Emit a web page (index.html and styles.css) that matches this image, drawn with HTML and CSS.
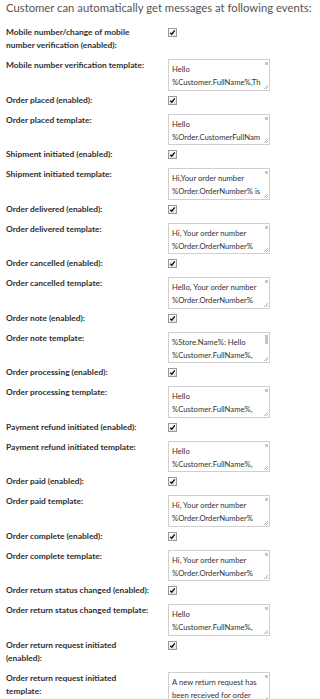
FILE: index.html
```html
<!DOCTYPE html>
<html lang="en">
<head>
<meta charset="utf-8">
<title>SMS events</title>
<link rel="stylesheet" href="styles.css">
</head>
<body>
<div class="page">
  <div class="title">Customer can automatically get messages at following events:</div>

  <div class="row check"><div class="label">Mobile number/change of mobile number verification (enabled):</div><span class="cb"><svg viewBox="0 0 8 8" width="8" height="8"><path d="M1.5 4.2 L3.2 6 L6.6 1.6" fill="none" stroke="#111" stroke-width="1.6"/></svg></span></div>
  <div class="row tpl"><div class="label">Mobile number verification template:</div><div class="field"><textarea>Hello
%Customer.FullName%,Thanks</textarea><span class="sb"></span><span class="grip"></span></div></div>

  <div class="row check"><div class="label">Order placed (enabled):</div><span class="cb"><svg viewBox="0 0 8 8" width="8" height="8"><path d="M1.5 4.2 L3.2 6 L6.6 1.6" fill="none" stroke="#111" stroke-width="1.6"/></svg></span></div>
  <div class="row tpl"><div class="label">Order placed template:</div><div class="field"><textarea>Hello
%Order.CustomerFullName%,</textarea><span class="sb"></span><span class="grip"></span></div></div>

  <div class="row check"><div class="label">Shipment initiated (enabled):</div><span class="cb"><svg viewBox="0 0 8 8" width="8" height="8"><path d="M1.5 4.2 L3.2 6 L6.6 1.6" fill="none" stroke="#111" stroke-width="1.6"/></svg></span></div>
  <div class="row tpl"><div class="label">Shipment initiated template:</div><div class="field"><textarea>Hi,Your order number
%Order.OrderNumber% is
shipped.</textarea><span class="sb"></span><span class="grip"></span></div></div>

  <div class="row check"><div class="label">Order delivered (enabled):</div><span class="cb"><svg viewBox="0 0 8 8" width="8" height="8"><path d="M1.5 4.2 L3.2 6 L6.6 1.6" fill="none" stroke="#111" stroke-width="1.6"/></svg></span></div>
  <div class="row tpl"><div class="label">Order delivered template:</div><div class="field"><textarea>Hi, Your order number
%Order.OrderNumber%
has been delivered.</textarea><span class="sb"></span><span class="grip"></span></div></div>

  <div class="row check"><div class="label">Order cancelled (enabled):</div><span class="cb"><svg viewBox="0 0 8 8" width="8" height="8"><path d="M1.5 4.2 L3.2 6 L6.6 1.6" fill="none" stroke="#111" stroke-width="1.6"/></svg></span></div>
  <div class="row tpl"><div class="label">Order cancelled template:</div><div class="field"><textarea>Hello, Your order number
%Order.OrderNumber%
has been cancelled.</textarea><span class="sb"></span><span class="grip"></span></div></div>

  <div class="row check"><div class="label">Order note (enabled):</div><span class="cb"><svg viewBox="0 0 8 8" width="8" height="8"><path d="M1.5 4.2 L3.2 6 L6.6 1.6" fill="none" stroke="#111" stroke-width="1.6"/></svg></span></div>
  <div class="row tpl"><div class="label">Order note template:</div><div class="field"><textarea>%Store.Name%: Hello
%Customer.FullName%,
a new order note has been added to your account.</textarea><span class="thumb"></span><span class="grip"></span></div></div>

  <div class="row check"><div class="label">Order processing (enabled):</div><span class="cb"><svg viewBox="0 0 8 8" width="8" height="8"><path d="M1.5 4.2 L3.2 6 L6.6 1.6" fill="none" stroke="#111" stroke-width="1.6"/></svg></span></div>
  <div class="row tpl"><div class="label">Order processing template:</div><div class="field"><textarea>Hello
%Customer.FullName%,
your order is being processed.</textarea><span class="sb"></span><span class="grip"></span></div></div>

  <div class="row check"><div class="label">Payment refund initiated (enabled):</div><span class="cb"><svg viewBox="0 0 8 8" width="8" height="8"><path d="M1.5 4.2 L3.2 6 L6.6 1.6" fill="none" stroke="#111" stroke-width="1.6"/></svg></span></div>
  <div class="row tpl"><div class="label">Payment refund initiated template:</div><div class="field"><textarea>Hello
%Customer.FullName%,
your refund has been initiated.</textarea><span class="sb"></span><span class="grip"></span></div></div>

  <div class="row check"><div class="label">Order paid (enabled):</div><span class="cb"><svg viewBox="0 0 8 8" width="8" height="8"><path d="M1.5 4.2 L3.2 6 L6.6 1.6" fill="none" stroke="#111" stroke-width="1.6"/></svg></span></div>
  <div class="row tpl"><div class="label">Order paid template:</div><div class="field"><textarea>Hi, Your order number
%Order.OrderNumber%
has been paid.</textarea><span class="sb"></span><span class="grip"></span></div></div>

  <div class="row check"><div class="label">Order complete (enabled):</div><span class="cb"><svg viewBox="0 0 8 8" width="8" height="8"><path d="M1.5 4.2 L3.2 6 L6.6 1.6" fill="none" stroke="#111" stroke-width="1.6"/></svg></span></div>
  <div class="row tpl"><div class="label">Order complete template:</div><div class="field"><textarea>Hi, Your order number
%Order.OrderNumber%
has been completed.</textarea><span class="sb"></span><span class="grip"></span></div></div>

  <div class="row check"><div class="label">Order return status changed (enabled):</div><span class="cb"><svg viewBox="0 0 8 8" width="8" height="8"><path d="M1.5 4.2 L3.2 6 L6.6 1.6" fill="none" stroke="#111" stroke-width="1.6"/></svg></span></div>
  <div class="row tpl"><div class="label">Order return status changed template:</div><div class="field"><textarea>Hello
%Customer.FullName%,
your return request status has changed.</textarea><span class="sb"></span><span class="grip"></span></div></div>

  <div class="row check"><div class="label">Order return request initiated (enabled):</div><span class="cb"><svg viewBox="0 0 8 8" width="8" height="8"><path d="M1.5 4.2 L3.2 6 L6.6 1.6" fill="none" stroke="#111" stroke-width="1.6"/></svg></span></div>
  <div class="row tpl"><div class="label">Order return request initiated template:</div><div class="field"><textarea>A new return request has
been received for order
%Order.OrderNumber%.</textarea><span class="sb"></span><span class="grip"></span></div></div>
</div>
</body>
</html>
```

FILE: styles.css
```css
html, body {
  margin: 0;
  padding: 0;
  background: #fff;
}
body {
  font-family: Lato, "Open Sans", sans-serif;
  color: #333;
}
.page {
  padding: 1px 0 0 6px;
}
.title {
  font-size: 11.3px;
  line-height: 14px;
  color: #555;
  margin: 0 0 11px;
  white-space: nowrap;
}
.row {
  display: flex;
  align-items: flex-start;
}
.row.check {
  margin-bottom: 7px;
}
.row.tpl {
  margin-bottom: 3px;
}
.label {
  flex: none;
  width: 146px;
  margin-right: 16px;
  font-weight: 700;
  font-size: 8.4px;
  line-height: 13px;
  color: #2e2e2e;
}
.cb {
  flex: none;
  box-sizing: border-box;
  width: 9px;
  height: 9px;
  margin-top: 2px;
  border: 1px solid #9a9a9a;
  background: linear-gradient(#fdfdfd, #e6e6e6);
  display: flex;
  align-items: center;
  justify-content: center;
}
.cb svg {
  display: block;
  width: 7px;
  height: 7px;
}
.field {
  position: relative;
  flex: none;
  width: 102px;
  height: 31.5px;
}
.field textarea {
  display: block;
  box-sizing: border-box;
  width: 100%;
  height: 100%;
  margin: 0;
  padding: 3px 5px 0 3px;
  border: 1px solid #cfcfcf;
  font-family: Lato, "Open Sans", sans-serif;
  font-size: 7.7px;
  line-height: 13px;
  color: #333;
  background: #fff;
  overflow: hidden;
  resize: none;
  word-break: break-all;
}
.sb {
  position: absolute;
  right: 2px;
  top: 3px;
  width: 3px;
  height: 3px;
  background: #c8c8c8;
}
.thumb {
  position: absolute;
  right: 2px;
  top: 3px;
  width: 3px;
  height: 9px;
  background: #c4c4c4;
}
.grip {
  position: absolute;
  right: 2px;
  bottom: 2px;
  width: 4px;
  height: 4px;
  background:
    linear-gradient(135deg, transparent 45%, #b5b5b5 45%, #b5b5b5 60%, transparent 60%, transparent 72%, #b5b5b5 72%, #b5b5b5 87%, transparent 87%);
}
```
